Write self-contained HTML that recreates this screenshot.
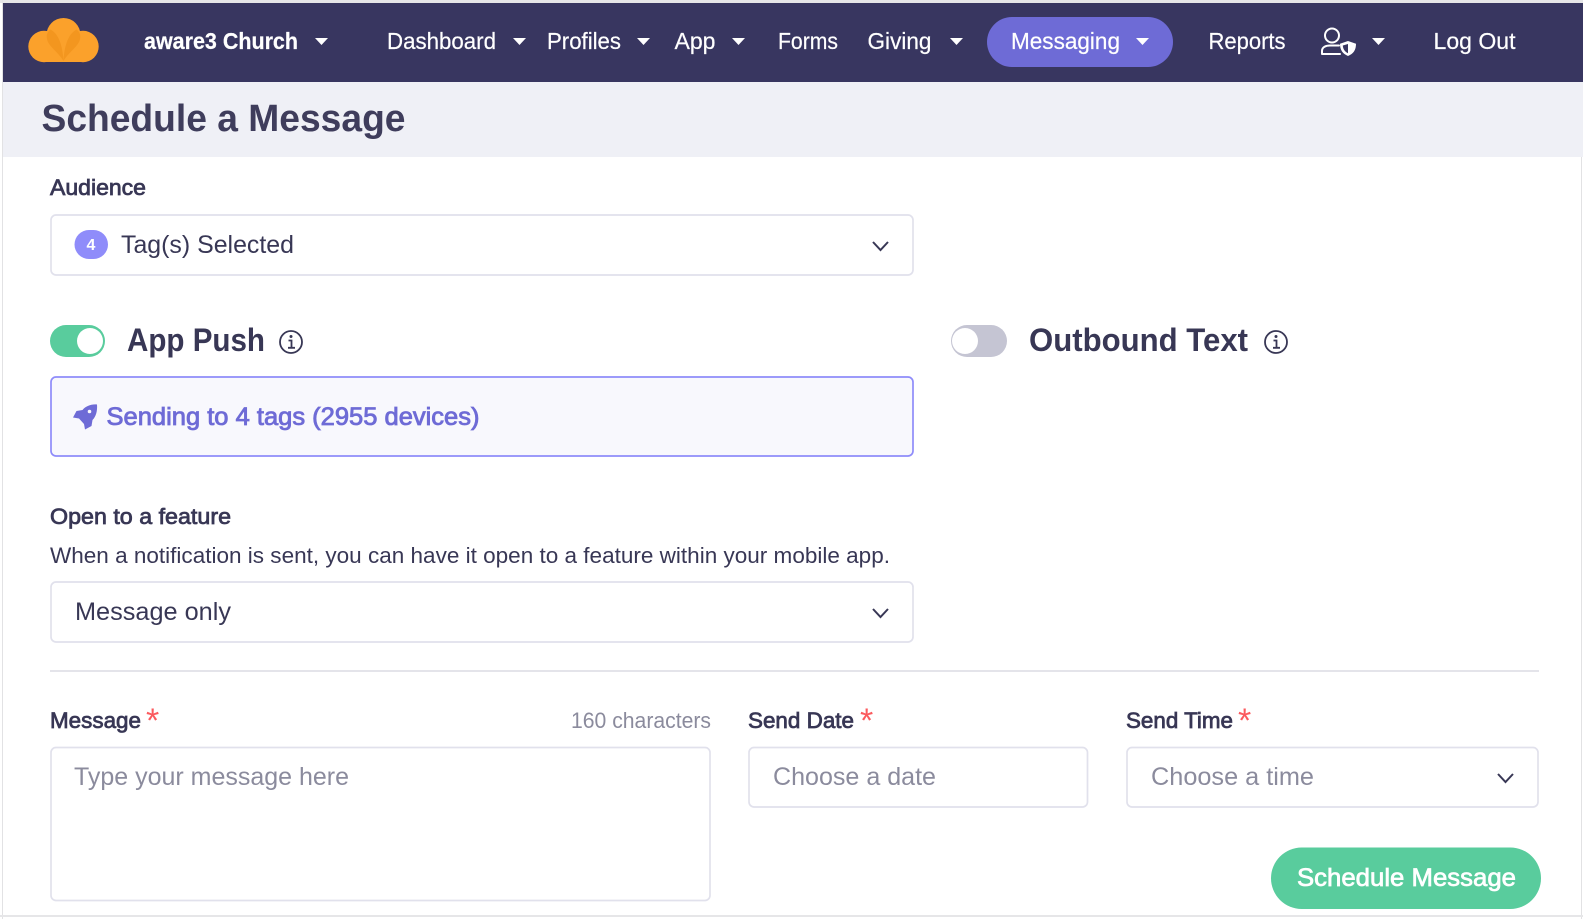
<!DOCTYPE html>
<html lang="en">
<head>
<meta charset="utf-8">
<title>Schedule a Message</title>
<style>
html,body{margin:0;padding:0;width:1583px;height:919px;overflow:hidden;background:#fff}
svg{display:block;position:absolute;left:0;top:0;filter:blur(.35px)}
text{font-family:"Liberation Sans",sans-serif}
.nav{fill:#fff;font-size:23px;stroke:#fff;stroke-width:.2px}
.lbl{fill:#383755;font-size:22px;stroke:#383755;stroke-width:.75px}
.body{fill:#383755;font-size:25px}
.ph{fill:#8b8b9d;font-size:25px}
.h{fill:#383755;font-size:32px;font-weight:700}
.box{fill:#fff;stroke:#e1e1ec;stroke-width:1.7}
.chev{fill:none;stroke:#383755;stroke-width:2}
.star{fill:#fb5a5e;font-size:34px}
</style>
</head>
<body>
<svg width="1583" height="919" viewBox="0 0 1583 919" xmlns="http://www.w3.org/2000/svg">
  <!-- frame -->
  <rect x="0" y="0" width="1583" height="3" fill="#e6e6e8"/>
  <rect x="2" y="0" width="1" height="919" fill="#e2e2e4"/>
  <rect x="1581" y="88" width="1" height="831" fill="#e2e2e4"/>
  <rect x="0" y="915" width="1583" height="2" fill="#e6e6e8"/>
  <!-- nav -->
  <rect x="3" y="3" width="1580" height="79" fill="#383660"/>
  <!-- logo -->
  <g>
    <circle cx="63.5" cy="35" r="17" fill="#fba12b"/>
    <circle cx="44" cy="46.5" r="15.7" fill="#fba12b"/>
    <circle cx="83" cy="46.5" r="15.7" fill="#fba12b"/>
    <rect x="44" y="40" width="39" height="22" fill="#fba12b"/>
    <path d="M63.5 61C57 50 46.500 46 46.700 36Q47 32 50.500 29.500C57 33 62.500 42 63.500 61Z" fill="#f3961f"/>
    <path d="M63.5 61C70 50 80.500 46 80.300 36Q80 32 76.500 29.500C70 33 64.500 42 63.500 61Z" fill="#f3961f"/>
  </g>
  <text x="144" y="49" class="nav" font-weight="700" textLength="154" lengthAdjust="spacingAndGlyphs">aware3 Church</text>
  <path d="M315 38h13l-6.500 7z" fill="#fff"/>
  <text x="387" y="49" class="nav" textLength="109" lengthAdjust="spacingAndGlyphs">Dashboard</text>
  <path d="M513 38h13l-6.500 7z" fill="#fff"/>
  <text x="547" y="49" class="nav" textLength="74" lengthAdjust="spacingAndGlyphs">Profiles</text>
  <path d="M637 38h13l-6.500 7z" fill="#fff"/>
  <text x="674.500" y="49" class="nav" textLength="41" lengthAdjust="spacingAndGlyphs">App</text>
  <path d="M732 38h13l-6.500 7z" fill="#fff"/>
  <text x="778" y="49" class="nav" textLength="60" lengthAdjust="spacingAndGlyphs">Forms</text>
  <text x="867.500" y="49" class="nav" textLength="64" lengthAdjust="spacingAndGlyphs">Giving</text>
  <path d="M950 38h13l-6.500 7z" fill="#fff"/>
  <rect x="987" y="17" width="186" height="50" rx="25" fill="#6e6bd6"/>
  <text x="1011" y="49" class="nav" textLength="109" lengthAdjust="spacingAndGlyphs">Messaging</text>
  <path d="M1136 38h13l-6.500 7z" fill="#fff"/>
  <text x="1208.500" y="49" class="nav" textLength="77" lengthAdjust="spacingAndGlyphs">Reports</text>
  <!-- user shield -->
  <circle cx="1332" cy="35.500" r="7" fill="none" stroke="#fff" stroke-width="2"/>
  <path d="M1340 54H1322V51C1322 47 1326 45.500 1330 45.500H1339" fill="none" stroke="#fff" stroke-width="2" stroke-linecap="round" stroke-linejoin="round"/>
  <path d="M1348 41L1356 43.800C1356 50 1353.500 53.800 1348 56C1342.500 53.800 1340 50 1340 43.800Z" fill="#fff"/>
  <path d="M1348 44L1348 53.300C1345 51.700 1343 49.500 1342.800 45.500Z" fill="#383660"/>
  <path d="M1372 38h13l-6.500 7z" fill="#fff"/>
  <text x="1433.500" y="49" class="nav" textLength="82" lengthAdjust="spacingAndGlyphs">Log Out</text>

  <!-- sub header -->
  <rect x="3" y="82" width="1580" height="75" fill="#eff0f6"/>
  <text x="41.500" y="131" fill="#3f3d5c" font-size="38" font-weight="700" textLength="364" lengthAdjust="spacingAndGlyphs">Schedule a Message</text>

  <!-- audience -->
  <text x="50" y="195" class="lbl" textLength="96" lengthAdjust="spacingAndGlyphs">Audience</text>
  <rect x="51" y="215" width="862" height="60" rx="5" class="box"/>
  <rect x="74.500" y="230" width="33.500" height="29" rx="14.500" fill="#8f8cfa"/>
  <text x="91" y="250" fill="#fff" font-size="16" font-weight="700" text-anchor="middle">4</text>
  <text x="121" y="253" class="body" textLength="173" lengthAdjust="spacingAndGlyphs">Tag(s) Selected</text>
  <path d="M873 242l7.500 8 7.500-8" class="chev"/>

  <!-- app push -->
  <rect x="50" y="325" width="55" height="32" rx="16" fill="#59cc9d"/>
  <circle cx="90" cy="341" r="13" fill="#fff"/>
  <text x="127" y="351" class="h" textLength="138" lengthAdjust="spacingAndGlyphs">App Push</text>
  <circle cx="291" cy="342" r="11" fill="none" stroke="#383755" stroke-width="1.800"/>
  <circle cx="291" cy="336.500" r="1.500" fill="#383755"/>
  <path d="M288.500 340.500H291.500V347.500M288 347.800H295" fill="none" stroke="#383755" stroke-width="1.800"/>

  <!-- outbound -->
  <rect x="951" y="325" width="56" height="32" rx="16" fill="#c5c5d3"/>
  <circle cx="965" cy="341" r="13" fill="#fff"/>
  <text x="1029" y="351" class="h" textLength="219" lengthAdjust="spacingAndGlyphs">Outbound Text</text>
  <circle cx="1276" cy="342" r="11" fill="none" stroke="#383755" stroke-width="1.800"/>
  <circle cx="1276" cy="336.500" r="1.500" fill="#383755"/>
  <path d="M1273.500 340.500H1276.500V347.500M1273 347.800H1280" fill="none" stroke="#383755" stroke-width="1.800"/>

  <!-- alert -->
  <rect x="51" y="377" width="862" height="79" rx="5" fill="#f8f8fd" stroke="#8f8cfa" stroke-width="1.700"/>
  <path d="M97 404.500C91 404 86 406 82.500 410L76.500 411L73 417.500L79 418.500L84 424L85 429.500L91.500 426L92.500 420C96 416.500 97.500 411 97 404.500Z" fill="#6e6bd6"/>
  <circle cx="89.500" cy="411.500" r="1.800" fill="#f8f8fd"/>
  <text x="106.500" y="425" fill="#6e6bd6" font-size="25" stroke="#6e6bd6" stroke-width=".85" textLength="373" lengthAdjust="spacingAndGlyphs">Sending to 4 tags (2955 devices)</text>

  <!-- open to -->
  <text x="50" y="524" class="lbl" textLength="181" lengthAdjust="spacingAndGlyphs">Open to a feature</text>
  <text x="50" y="563" fill="#383755" font-size="22" textLength="840" lengthAdjust="spacingAndGlyphs">When a notification is sent, you can have it open to a feature within your mobile app.</text>
  <rect x="51" y="582" width="862" height="60" rx="5" class="box"/>
  <text x="75" y="620" class="body" textLength="156" lengthAdjust="spacingAndGlyphs">Message only</text>
  <path d="M873 609l7.500 8 7.500-8" class="chev"/>

  <rect x="50" y="670" width="1489" height="2" fill="#e4e4ea"/>

  <!-- message row -->
  <text x="50" y="728" class="lbl" textLength="91" lengthAdjust="spacingAndGlyphs">Message</text>
  <text x="146" y="732" class="star">*</text>
  <text x="571" y="728" fill="#8b8b9d" font-size="22" textLength="140" lengthAdjust="spacingAndGlyphs">160 characters</text>
  <rect x="51" y="747.500" width="659" height="153" rx="5" class="box"/>
  <text x="74" y="785" class="ph" textLength="275" lengthAdjust="spacingAndGlyphs">Type your message here</text>

  <text x="748" y="728" class="lbl" textLength="106" lengthAdjust="spacingAndGlyphs">Send Date</text>
  <text x="860" y="732" class="star">*</text>
  <rect x="749" y="747.500" width="338.500" height="59.500" rx="5" class="box"/>
  <text x="773" y="785" class="ph" textLength="163" lengthAdjust="spacingAndGlyphs">Choose a date</text>

  <text x="1126" y="728" class="lbl" textLength="107" lengthAdjust="spacingAndGlyphs">Send Time</text>
  <text x="1238" y="732" class="star">*</text>
  <rect x="1127" y="747.500" width="411" height="59.500" rx="5" class="box"/>
  <text x="1151" y="785" class="ph" textLength="163" lengthAdjust="spacingAndGlyphs">Choose a time</text>
  <path d="M1498 774l7.500 8 7.500-8" class="chev"/>

  <!-- button -->
  <rect x="1271" y="847.500" width="270" height="61.500" rx="30.700" fill="#59cc9d"/>
  <text x="1297" y="886" fill="#fff" font-size="25" stroke="#fff" stroke-width=".7" textLength="219" lengthAdjust="spacingAndGlyphs">Schedule Message</text>
</svg>
</body>
</html>
